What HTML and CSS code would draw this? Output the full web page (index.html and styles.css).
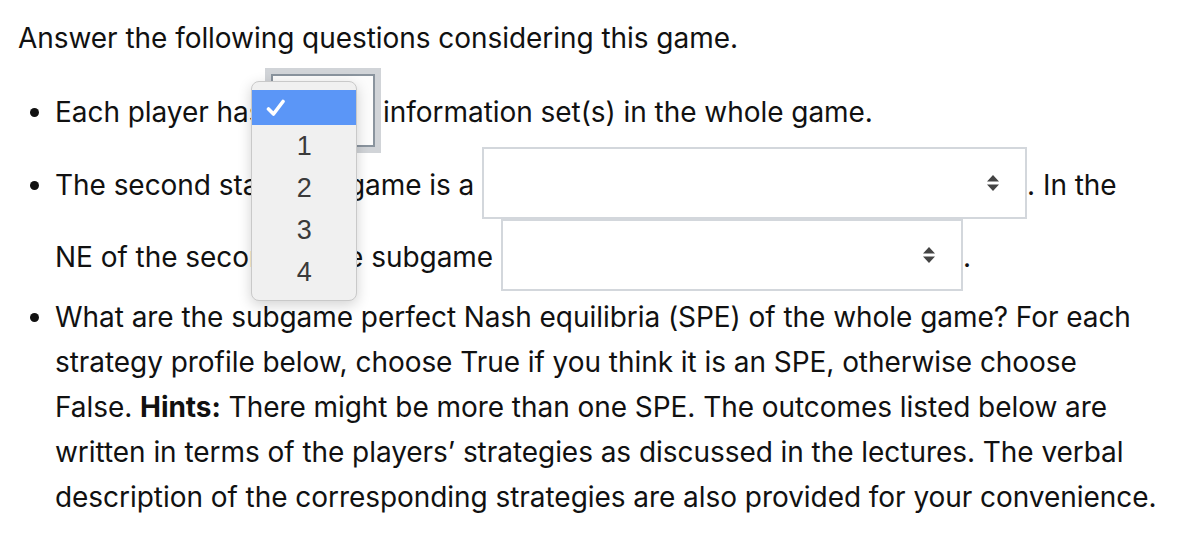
FILE: index.html
```html
<!DOCTYPE html>
<html lang="en">
<head>
<meta charset="utf-8">
<title>Questions</title>
<link rel="stylesheet" href="styles.css">
</head>
<body>
<div class="page">
  <p class="intro">Answer the following questions considering this game.</p>
  <ul class="questions">
    <li>Each player has <span class="dd dd-small dd-focus"><span class="menu">
        <span class="opt opt-sel"><svg class="check" width="20" height="18" viewBox="0 0 20 18"><path d="M2.5 10 L7.5 15 L17 2.5" fill="none" stroke="#fff" stroke-width="3.6" stroke-linecap="round" stroke-linejoin="round"/></svg></span>
        <span class="opt">1</span>
        <span class="opt">2</span>
        <span class="opt">3</span>
        <span class="opt">4</span>
      </span></span> information set(s) in the whole game.</li>
    <li>The second stage subgame is a <span class="dd dd-wide"><svg class="arrows" width="12" height="16" viewBox="0 0 12 16"><path d="M6 0 L12 6.5 H0 Z M6 16 L12 9.5 H0 Z" fill="#444"/></svg></span>. In the NE of the second stage subgame <span class="dd dd-mid"><svg class="arrows" width="12" height="16" viewBox="0 0 12 16"><path d="M6 0 L12 6.5 H0 Z M6 16 L12 9.5 H0 Z" fill="#444"/></svg></span>.</li>
    <li>What are the subgame perfect Nash equilibria (SPE) of the whole game? For each strategy profile below, choose True if you think it is an SPE, otherwise choose False. <strong>Hints:</strong> There might be more than one SPE. The outcomes listed below are written in terms of the players’ strategies as discussed in the lectures. The verbal description of the corresponding strategies are also provided for your convenience.</li>
  </ul>
</div>
</body>
</html>
```
FILE: styles.css
```css
html, body {
  margin: 0;
  padding: 0;
  background: #ffffff;
}
.page {
  padding: 16px 18px 0 18px;
  width: 1139px;
  font-family: Inter, "Noto Sans", sans-serif;
  font-size: 28px;
  line-height: 45px;
  color: #111;
  letter-spacing: -0.05px;
}
.intro {
  margin: 0 0 17px 0;
}
.questions {
  margin: 0;
  padding-left: 37px;
}
.questions li {
  margin: 0;
}
.dd {
  display: inline-flex;
  align-items: center;
  justify-content: flex-end;
  vertical-align: middle;
  box-sizing: border-box;
  height: 72px;
  margin-top: -4px;
  margin-bottom: 4px;
  border: 2px solid #d3d7dc;
  background: #fff;
  position: relative;
}
.dd-small {
  width: 104px;
  height: 73px;
  border-color: #8a949e;
  background: #fcfcfc;
}
.dd-focus {
  box-shadow: 0 0 0 6px #d1d4d8;
}
.dd-wide {
  width: 545px;
}
.dd-mid {
  width: 462px;
}
.arrows {
  margin-right: 26px;
}
.menu {
  position: absolute;
  left: -22px;
  top: 5px;
  width: 106px;
  height: 220px;
  box-sizing: border-box;
  padding-top: 8px;
  background: #f0f0f0;
  border-radius: 8px;
  border: 1px solid #c9c9c9;
  box-shadow: 0 4px 14px rgba(0,0,0,0.18);
  display: flex;
  flex-direction: column;
  font-family: "Liberation Sans", Arial, sans-serif;
  font-size: 27px;
  letter-spacing: 0;
  color: #3a3a3a;
  z-index: 5;
}
.opt {
  display: block;
  text-align: center;
  height: 42px;
  line-height: 43px;
}
.opt-sel {
  background: #5b96f7;
  height: 35px;
  display: flex;
  align-items: center;
  margin-bottom: 0;
}
.check {
  margin-left: 14px;
}
```
